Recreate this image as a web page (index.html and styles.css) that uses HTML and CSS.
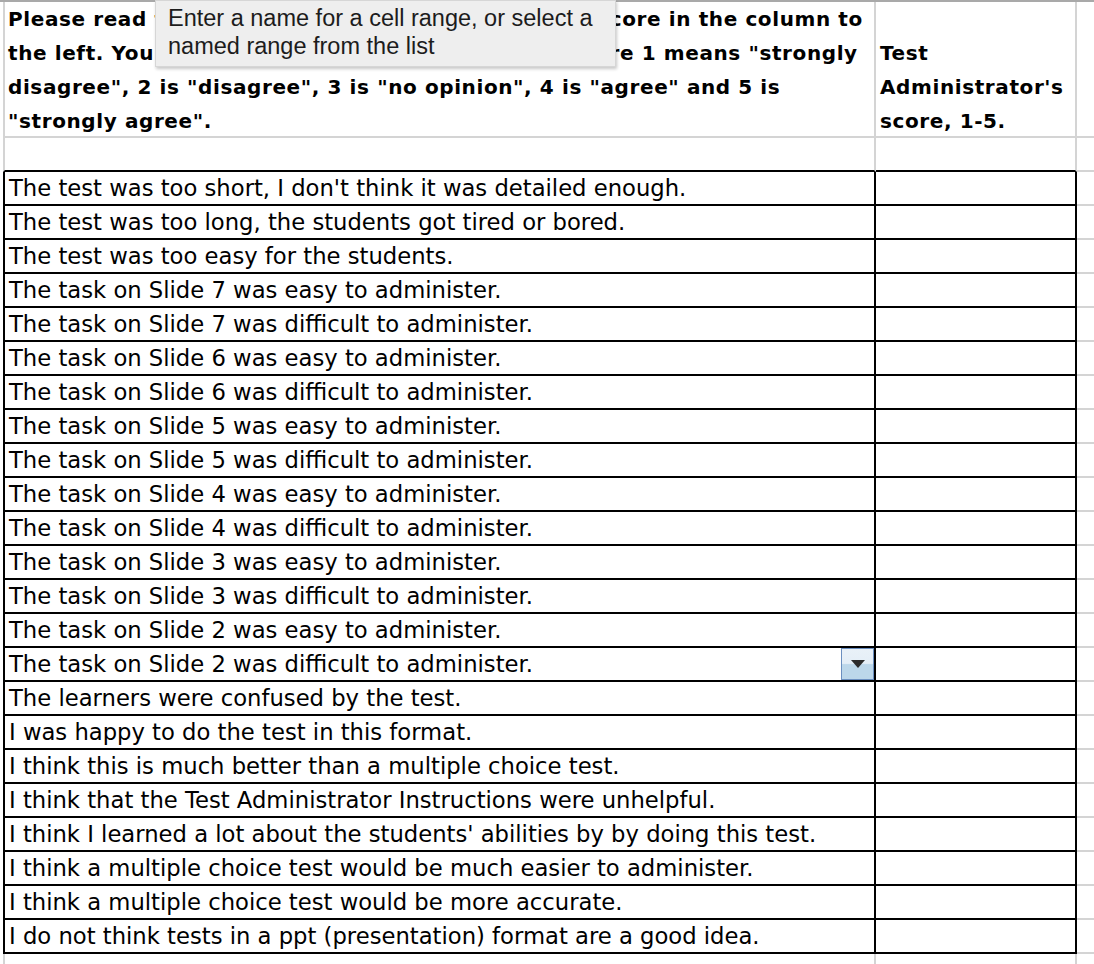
FILE: index.html
```html
<!DOCTYPE html>
<html>
<head>
<meta charset="utf-8">
<title>Test Administrator Questionnaire</title>
<link rel="stylesheet" href="styles.css">
</head>
<body>
<div class="sheet">
  <div class="row head">
    <div class="cell a"><p class="hdr">Please read the statements below, and give your score in the column to<br>the left. You should use a scale of one to five, where 1 means "strongly<br>disagree", 2 is "disagree", 3 is "no opinion", 4 is "agree" and 5 is<br>"strongly agree".</p></div>
    <div class="cell b"><p class="hdr hb">Test<br>Administrator's<br>score, 1-5.</p></div>
    <div class="cell c"></div>
  </div>
  <div class="row blank">
    <div class="cell a"></div>
    <div class="cell b"></div>
    <div class="cell c"></div>
  </div>
  <div class="row data"><div class="cell a">The test was too short, I don't think it was detailed enough.</div><div class="cell b"></div><div class="cell c"></div></div>
  <div class="row data"><div class="cell a">The test was too long, the students got tired or bored.</div><div class="cell b"></div><div class="cell c"></div></div>
  <div class="row data"><div class="cell a">The test was too easy for the students.</div><div class="cell b"></div><div class="cell c"></div></div>
  <div class="row data"><div class="cell a">The task on Slide 7 was easy to administer.</div><div class="cell b"></div><div class="cell c"></div></div>
  <div class="row data"><div class="cell a">The task on Slide 7 was difficult to administer.</div><div class="cell b"></div><div class="cell c"></div></div>
  <div class="row data"><div class="cell a">The task on Slide 6 was easy to administer.</div><div class="cell b"></div><div class="cell c"></div></div>
  <div class="row data"><div class="cell a">The task on Slide 6 was difficult to administer.</div><div class="cell b"></div><div class="cell c"></div></div>
  <div class="row data"><div class="cell a">The task on Slide 5 was easy to administer.</div><div class="cell b"></div><div class="cell c"></div></div>
  <div class="row data"><div class="cell a">The task on Slide 5 was difficult to administer.</div><div class="cell b"></div><div class="cell c"></div></div>
  <div class="row data"><div class="cell a">The task on Slide 4 was easy to administer.</div><div class="cell b"></div><div class="cell c"></div></div>
  <div class="row data"><div class="cell a">The task on Slide 4 was difficult to administer.</div><div class="cell b"></div><div class="cell c"></div></div>
  <div class="row data"><div class="cell a">The task on Slide 3 was easy to administer.</div><div class="cell b"></div><div class="cell c"></div></div>
  <div class="row data"><div class="cell a">The task on Slide 3 was difficult to administer.</div><div class="cell b"></div><div class="cell c"></div></div>
  <div class="row data"><div class="cell a">The task on Slide 2 was easy to administer.</div><div class="cell b"></div><div class="cell c"></div></div>
  <div class="row data"><div class="cell a">The task on Slide 2 was difficult to administer.<span class="dropdown"><svg width="14" height="8" viewBox="0 0 14 8"><path d="M0 0H14L7 8Z" fill="#2b2b2b"/></svg></span></div><div class="cell b"></div><div class="cell c"></div></div>
  <div class="row data"><div class="cell a">The learners were confused by the test.</div><div class="cell b"></div><div class="cell c"></div></div>
  <div class="row data"><div class="cell a">I was happy to do the test in this format.</div><div class="cell b"></div><div class="cell c"></div></div>
  <div class="row data"><div class="cell a">I think this is much better than a multiple choice test.</div><div class="cell b"></div><div class="cell c"></div></div>
  <div class="row data"><div class="cell a">I think that the Test Administrator Instructions were unhelpful.</div><div class="cell b"></div><div class="cell c"></div></div>
  <div class="row data"><div class="cell a">I think I learned a lot about the students' abilities by by doing this test.</div><div class="cell b"></div><div class="cell c"></div></div>
  <div class="row data"><div class="cell a">I think a multiple choice test would be much easier to administer.</div><div class="cell b"></div><div class="cell c"></div></div>
  <div class="row data"><div class="cell a">I think a multiple choice test would be more accurate.</div><div class="cell b"></div><div class="cell c"></div></div>
  <div class="row data"><div class="cell a">I do not think tests in a ppt (presentation) format are a good idea.</div><div class="cell b"></div><div class="cell c"></div></div>
  <div class="row tail">
    <div class="cell a"></div>
    <div class="cell b"></div>
    <div class="cell c"></div>
  </div>
  <div class="tooltip">Enter a name for a cell range, or select a<br>named range from the list</div>
</div>
</body>
</html>
```
FILE: styles.css
```css
html, body {
  margin: 0;
  padding: 0;
  background: #ffffff;
}
body {
  width: 1094px;
  height: 964px;
  overflow: hidden;
  font-family: "DejaVu Sans", sans-serif;
  color: #000;
}
.sheet {
  position: relative;
  border-top: 2px solid #a9a9a9;
  padding-left: 3px;
}
.row {
  display: flex;
}
.cell {
  box-sizing: border-box;
  position: relative;
}
.cell.a {
  width: 873px;
}
.cell.b {
  width: 201px;
}
.cell.c {
  flex: 1;
  border-bottom: 2px solid #d4d4d4;
}

/* header */
.head {
  height: 136px;
}
.head .cell {
  border-bottom: 2px solid #d4d4d4;
}
.head .a {
  border-left: 2px solid #d4d4d4;
  border-right: 2px solid #d4d4d4;
}
.head .b {
  border-right: 2px solid #d4d4d4;
}
.hdr {
  margin: 0;
  font-weight: bold;
  font-size: 20px;
  letter-spacing: 0.6px;
  line-height: 34px;
  white-space: nowrap;
  padding-left: 3px;
}
.hb {
  padding-top: 34px;
  padding-left: 4px;
}

/* blank row */
.blank {
  height: 34px;
}
.blank .a {
  border-left: 2px solid #d4d4d4;
  border-right: 2px solid #d4d4d4;
  border-bottom: 2px solid #000;
}
.blank .b {
  border-right: 2px solid #d4d4d4;
  border-bottom: 2px solid #000;
}

/* data rows */
.data {
  height: 34px;
}
.data .a {
  border-left: 2px solid #000;
  border-right: 2px solid #000;
  border-bottom: 2px solid #000;
  padding-left: 4px;
  font-size: 22.7px;
  line-height: 32px;
  white-space: nowrap;
}
.data .b {
  border-right: 2px solid #000;
  border-bottom: 2px solid #000;
}

/* tail */
.tail {
  height: 20px;
}
.tail .cell {
  border-bottom: none;
}
.tail .a {
  border-left: 2px solid #d4d4d4;
  border-right: 2px solid #d4d4d4;
}
.tail .b {
  border-right: 2px solid #d4d4d4;
}

/* dropdown button */
.dropdown {
  position: absolute;
  right: 0;
  top: 0;
  width: 33px;
  height: 32px;
  box-sizing: border-box;
  border: 1px solid #6b8fc0;
  background: linear-gradient(#e9f1f8 0%, #e4eef7 48%, #bcd7ea 52%, #bcd7ea 100%);
  display: flex;
  align-items: center;
  justify-content: center;
}

/* tooltip */
.tooltip {
  position: absolute;
  left: 155px;
  top: -2px;
  width: 461px;
  height: 67px;
  box-sizing: border-box;
  padding: 3px 0 0 12px;
  background: #eeeeee;
  border: 1px solid #d6d6d6;
  box-shadow: 1px 2px 3px rgba(0, 0, 0, 0.22);
  font-family: "Liberation Sans", Arial, sans-serif;
  font-size: 23.5px;
  line-height: 28px;
  color: #1c1c1c;
  white-space: nowrap;
}
```
